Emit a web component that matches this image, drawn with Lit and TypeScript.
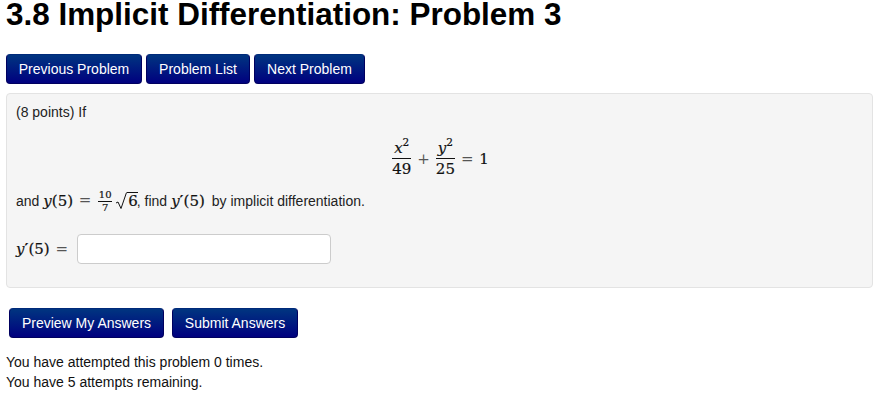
import { LitElement, html, css } from "lit";
import { customElement } from "lit/decorators.js";

@customElement("app-root")
export class AppRoot extends LitElement {
  static styles = css`
    :host {
      display: block;
      width: 887px;
      height: 400px;
      overflow: hidden;
      background: #fff;
      color: #000;
      font-family: "Liberation Sans", Arial, sans-serif;
      font-size: 14px;
      line-height: 20px;
    }
    h1 {
      margin: 0;
      padding: 0 0 0 6px;
      font-size: 31.45px;
      line-height: 30px;
      font-weight: 700;
      color: #000;
    }
    .nav {
      display: flex;
      gap: 4px;
      margin: 24px 0 0 6px;
    }
    .btn {
      display: block;
      box-sizing: border-box;
      height: 30px;
      border: 1px solid #00005f;
      border-top-color: #002a7a;
      border-radius: 4px;
      background: linear-gradient(to bottom, #003580, #00007f);
      color: #fff;
      font: 14px/28px "Liberation Sans", Arial, sans-serif;
      text-align: center;
      white-space: nowrap;
    }
    .w136 { width: 136px; }
    .w104 { width: 104px; }
    .w111 { width: 111px; }
    .w155 { width: 155px; }
    .w126 { width: 126px; }
    .well {
      box-sizing: border-box;
      width: 867px;
      height: 195px;
      margin: 9px 0 0 6px;
      padding: 8px 9px;
      background: #f5f5f5;
      border: 1px solid #e3e3e3;
      border-radius: 4px;
      color: #222;
      display: flex;
      flex-direction: column;
    }
    .display {
      display: flex;
      justify-content: center;
      align-items: center;
      gap: 5px;
      margin-top: 15px;
      height: 44px;
      margin-left: 2px;
    }
    .m {
      font-family: "DejaVu Serif", "Liberation Serif", serif;
      font-size: 15px;
      color: #111;
      -webkit-text-stroke: 0.2px #111;
      white-space: nowrap;
    }
    .i { font-style: italic; }
    .pr { font-weight: 700; }
    sup { font-size: 10.5px; line-height: 0; vertical-align: 7px; font-style: normal; }
    .frac {
      display: inline-flex;
      flex-direction: column;
      align-items: center;
      vertical-align: middle;
      line-height: 1;
    }
    .frac > span:first-child {
      padding: 0 0 2px;
      border-bottom: 1px solid #111;
      min-width: 19px;
      text-align: center;
    }
    .frac > span:last-child { padding-top: 3px; }
    .frac.small { font-size: 10px; margin: 0 2px 0 1px; }
    .frac.small > span:first-child { padding: 0 0 1px; min-width: 14px; }
    .frac.small > span:last-child { padding-top: 1px; }
    .rel { color: #555; margin: 0 1px; line-height: 1; -webkit-text-stroke: 0; }
    .line {
      margin-top: 8px;
      height: 24px;
      display: flex;
      align-items: center;
      gap: 4px;
      white-space: pre;
    }
    .root {
      display: inline-flex;
      align-items: flex-end;
      margin-left: -3px;
    }
    .root svg { display: block; }
    .root b {
      font-weight: 400;
      border-top: 1px solid #111;
      line-height: 17px;
      padding: 0 0 0 1px;
    }
    .find { margin-left: -5px; }
    .after { margin-left: 3px; }
    .answer {
      display: flex;
      align-items: center;
      gap: 8px;
      margin-top: 21px;
    }
    input {
      box-sizing: border-box;
      width: 254px;
      height: 30px;
      margin: 0;
      background: #fff;
      border: 1px solid #ccc;
      border-radius: 4px;
    }
    .actions {
      display: flex;
      gap: 8px;
      margin: 20px 0 0 9px;
    }
    .status { margin: 14px 0 0 6px; color: #111; }
  `;

  private yp() {
    return html`<span class="i">y</span><span class="pr">′</span>(5)`;
  }

  render() {
    return html`
      <h1>3.8 Implicit Differentiation: Problem 3</h1>
      <div class="nav">
        <div class="btn w136">Previous Problem</div>
        <div class="btn w104">Problem List</div>
        <div class="btn w111">Next Problem</div>
      </div>
      <div class="well">
        <div>(8 points) If</div>
        <div class="display m">
          <span class="frac"><span><span class="i">x</span><sup>2</sup></span><span>49</span></span>
          <span class="rel">+</span>
          <span class="frac"><span><span class="i">y</span><sup>2</sup></span><span>25</span></span>
          <span><span class="rel">=</span> 1</span>
        </div>
        <div class="line">
          <span>and</span>
          <span class="m"><span class="i">y</span>(5) <span class="rel">=</span>
            <span class="frac small"><span>10</span><span>7</span></span></span>
          <span class="m root"><svg width="12" height="18" viewBox="0 0 12 18"><path d="M1 11 L3 10 L6 16.5 L11.5 .5" fill="none" stroke="#111" stroke-width="1"/></svg><b>6</b></span><span class="find">, find</span>
          <span class="m">${this.yp()}</span>
          <span class="after">by implicit differentiation.</span>
        </div>
        <div class="answer">
          <span class="m">${this.yp()} <span class="rel">=</span></span>
          <input type="text" aria-label="answer" />
        </div>
      </div>
      <div class="actions">
        <div class="btn w155">Preview My Answers</div>
        <div class="btn w126">Submit Answers</div>
      </div>
      <div class="status">
        <div>You have attempted this problem 0 times.</div>
        <div>You have 5 attempts remaining.</div>
      </div>
    `;
  }
}
